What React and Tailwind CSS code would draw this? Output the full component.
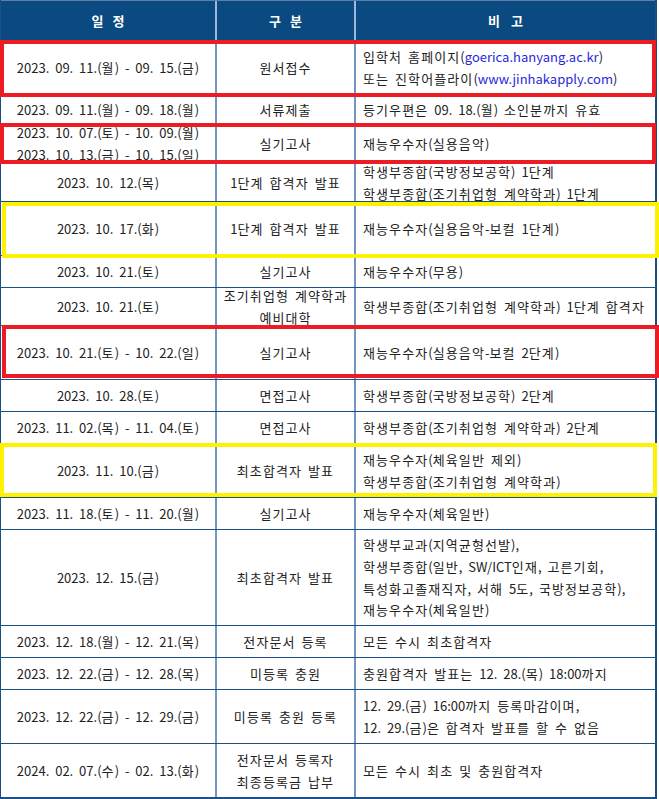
import React from "react";

// hangul runs get a little extra tracking so they sit as wide as in the original
const T = ({ children }) =>
  String(children)
    .split(/([가-힣]+)/)
    .map((part, i) =>
      /[가-힣]/.test(part) ? (
        <span key={i} className="tracking-[1.1px]">{part}</span>
      ) : (
        <React.Fragment key={i}>{part}</React.Fragment>
      )
    );

const Link = ({ children }) => <span className="text-[#2828dc]">{children}</span>;

const rows = [
  {
    h: "h-[56px]",
    date: ["2023. 09. 11.(월) - 09. 15.(금)"],
    kind: ["원서접수"],
    note: [
      <><T>입학처 홈페이지(</T><Link>goerica.hanyang.ac.kr</Link>)</>,
      <><T>또는 진학어플라이(</T><Link>www.jinhakapply.com</Link>)</>,
    ],
  },
  { h: "h-[28px]", date: ["2023. 09. 11.(월) - 09. 18.(월)"], kind: ["서류제출"], note: ["등기우편은 09. 18.(월) 소인분까지 유효"] },
  {
    h: "h-[40px]",
    date: ["2023. 10. 07.(토) - 10. 09.(월)", "2023. 10. 13.(금) - 10. 15.(일)"],
    kind: ["실기고사"],
    note: ["재능우수자(실용음악)"],
  },
  {
    h: "h-[38px]",
    date: ["2023. 10. 12.(목)"],
    kind: ["1단계 합격자 발표"],
    note: ["학생부종합(국방정보공학) 1단계", "학생부종합(조기취업형 계약학과) 1단계"],
  },
  { h: "h-[54px]", date: ["2023. 10. 17.(화)"], kind: ["1단계 합격자 발표"], note: ["재능우수자(실용음악-보컬 1단계)"] },
  { h: "h-[32px]", date: ["2023. 10. 21.(토)"], kind: ["실기고사"], note: ["재능우수자(무용)"] },
  {
    h: "h-[38px]",
    date: ["2023. 10. 21.(토)"],
    kind: ["조기취업형 계약학과", "예비대학"],
    note: ["학생부종합(조기취업형 계약학과) 1단계 합격자"],
  },
  { h: "h-[54px]", date: ["2023. 10. 21.(토) - 10. 22.(일)"], kind: ["실기고사"], note: ["재능우수자(실용음악-보컬 2단계)"] },
  { h: "h-[32px]", date: ["2023. 10. 28.(토)"], kind: ["면접고사"], note: ["학생부종합(국방정보공학) 2단계"] },
  { h: "h-[32px]", date: ["2023. 11. 02.(목) - 11. 04.(토)"], kind: ["면접고사"], note: ["학생부종합(조기취업형 계약학과) 2단계"] },
  {
    h: "h-[54px]",
    date: ["2023. 11. 10.(금)"],
    kind: ["최초합격자 발표"],
    note: ["재능우수자(체육일반 제외)", "학생부종합(조기취업형 계약학과)"],
  },
  { h: "h-[32px]", date: ["2023. 11. 18.(토) - 11. 20.(월)"], kind: ["실기고사"], note: ["재능우수자(체육일반)"] },
  {
    h: "h-[96px]",
    date: ["2023. 12. 15.(금)"],
    kind: ["최초합격자 발표"],
    note: [
      "학생부교과(지역균형선발),",
      "학생부종합(일반, SW/ICT인재, 고른기회,",
      "특성화고졸재직자, 서해 5도, 국방정보공학),",
      "재능우수자(체육일반)",
    ],
  },
  { h: "h-[32px]", date: ["2023. 12. 18.(월) - 12. 21.(목)"], kind: ["전자문서 등록"], note: ["모든 수시 최초합격자"] },
  { h: "h-[32px]", date: ["2023. 12. 22.(금) - 12. 28.(목)"], kind: ["미등록 충원"], note: ["충원합격자 발표는 12. 28.(목) 18:00까지"] },
  {
    h: "h-[54px]",
    date: ["2023. 12. 22.(금) - 12. 29.(금)"],
    kind: ["미등록 충원 등록"],
    note: ["12. 29.(금) 16:00까지 등록마감이며,", "12. 29.(금)은 합격자 발표를 할 수 없음"],
  },
  {
    h: "h-[53px]",
    date: ["2024. 02. 07.(수) - 02. 13.(화)"],
    kind: ["전자문서 등록자", "최종등록금 납부"],
    note: ["모든 수시 최초 및 충원합격자"],
  },
];

const Lines = ({ items }) =>
  items.map((t, i) => (
    <div key={i} className="whitespace-nowrap">
      {typeof t === "string" ? <T>{t}</T> : t}
    </div>
  ));

export default function App() {
  return (
    <div className="w-[659px] h-[799px] bg-white overflow-hidden">
      <div
        className="relative w-[657px] border-l border-r-2 border-b-2 border-[#1d4e86] text-[13px] leading-[21.7px] text-[#222] [word-spacing:3px]"
        style={{ fontFamily: '"Noto Sans CJK KR", "Noto Sans", sans-serif' }}
      >
        {/* header */}
        <div className="flex h-[40px] bg-[#0b4a80] border-t border-[#5a7fa8] text-white font-bold">
          <div className="w-[214px] flex items-center justify-center [word-spacing:6px]">일 정</div>
          <div className="w-[139px] flex items-center justify-center border-l-2 border-[#9db8da] [word-spacing:6px]">구 분</div>
          <div className="flex-1 flex items-center justify-center border-l-2 border-[#9db8da] [word-spacing:8px]">비 고</div>
        </div>

        {rows.map((r, i) => (
          <div
            key={i}
            className={`flex ${r.h} ${i < rows.length - 1 ? "border-b border-[#1d4e86]" : ""}`}
          >
            <div className="w-[214px] flex flex-col items-center justify-center">
              <Lines items={r.date} />
            </div>
            <div className="w-[139px] flex flex-col items-center justify-center border-l-2 border-[#7094c4]">
              <Lines items={r.kind} />
            </div>
            <div className="flex-1 flex flex-col justify-center pl-[7px] border-l-2 border-[#7094c4]">
              <Lines items={r.note} />
            </div>
          </div>
        ))}

        {/* highlight boxes drawn over the table */}
        <div className="absolute left-[-1px] top-[40px] w-[656px] h-[57px] border-4 border-[#ed1c24]" />
        <div className="absolute left-[-1px] top-[123px] w-[656px] h-[41px] border-4 border-[#ed1c24]" />
        <div className="absolute left-[1px] top-[202px] w-[657px] h-[56px] border-4 border-[#fff200]" />
        <div className="absolute left-[1px] top-[325px] w-[657px] h-[53px] border-4 border-[#ed1c24]" />
        <div className="absolute left-[-1px] top-[443px] w-[657px] h-[54px] border-4 border-[#fff200]" />
      </div>
    </div>
  );
}
